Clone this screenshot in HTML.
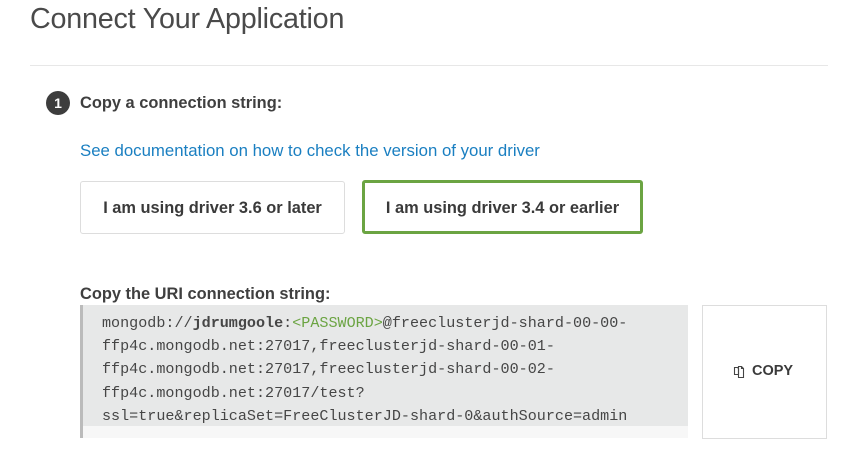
<!DOCTYPE html>
<html><head><meta charset="utf-8"><style>
*{margin:0;padding:0;box-sizing:border-box}
body{width:858px;height:461px;overflow:hidden;background:#fff;font-family:"Liberation Sans",sans-serif;color:#3d4f58;position:relative}
.a{position:absolute;white-space:nowrap}
h1{position:absolute;left:30px;top:0;font-size:28.7px;font-weight:300;color:#4a4a4a;line-height:38px;letter-spacing:-0.2px}
.hr{position:absolute;left:30px;top:65px;width:798px;height:1px;background:#e7e7e7}
.num{position:absolute;left:46px;top:91px;width:24px;height:24px;border-radius:50%;background:#3d3d3d;color:#fff;font-size:14px;font-weight:bold;text-align:center;line-height:24px}
.btn{position:absolute;border-radius:3px;background:#fff;text-align:center;font-size:16.4px;font-weight:bold;color:#3a3a3a}
.code{position:absolute;left:80px;top:305px;width:608px;height:133px;background:#f7f7f7;border-left:3px solid #bbb}
.codein{position:absolute;left:0;top:0;width:605px;height:121px;background:#e7e8e8}
pre{position:absolute;left:19px;top:7px;font-family:"Liberation Mono",monospace;font-size:15.1px;line-height:23.2px;color:#464646}
</style></head><body>
<h1>Connect Your Application</h1>
<div class="hr"></div>
<div class="num">1</div>
<div class="a" style="left:80px;top:94px;font-size:16.4px;font-weight:bold;color:#3f3f3f">Copy a connection string:</div>
<div class="a" style="left:80px;top:141px;font-size:16.8px;color:#1a7fc1">See documentation on how to check the version of your driver</div>
<div class="btn" style="left:80px;top:181px;width:265px;height:53px;border:1px solid #ddd;line-height:53px">I am using driver 3.6 or later</div>
<div class="btn" style="left:362px;top:180px;width:281px;height:54px;border:3px solid #6ba442;line-height:50px">I am using driver 3.4 or earlier</div>
<div class="a" style="left:80px;top:285px;font-size:16.4px;font-weight:bold;color:#3f3f3f">Copy the URI connection string:</div>
<div class="code"><div class="codein"></div>
<pre>mongodb://<b>jdrumgoole</b>:<span style="color:#6ba442">&lt;PASSWORD&gt;</span>@freeclusterjd-shard-00-00-
ffp4c.mongodb.net:27017,freeclusterjd-shard-00-01-
ffp4c.mongodb.net:27017,freeclusterjd-shard-00-02-
ffp4c.mongodb.net:27017/test?
ssl=true&amp;replicaSet=FreeClusterJD-shard-0&amp;authSource=admin</pre></div>
<div style="position:absolute;left:702px;top:305px;width:125px;height:134px;border:1px solid #ddd;background:#fff"></div>
<svg class="a" style="left:733px;top:364px" width="16" height="16" viewBox="0 0 16 16" fill="none" stroke="#444" stroke-width="1.1"><path d="M1.5 3.5h3l1 1v6h-4z"/><path d="M5.5 2.5h3l2 2v9h-5z"/><path d="M8.5 2.5v2h2"/></svg>
<div class="a" style="left:752px;top:363px;font-size:14.5px;font-weight:bold;color:#3a3a3a">COPY</div>
</body></html>
